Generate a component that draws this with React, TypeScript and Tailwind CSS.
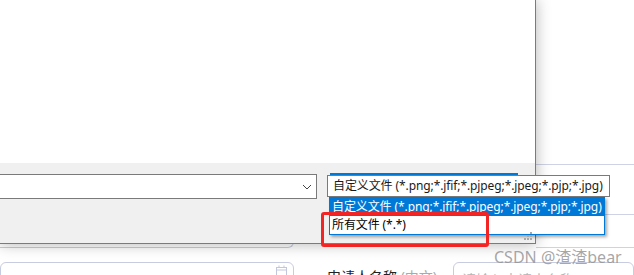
import React from 'react';

const uiFont = { fontFamily: '"Noto Sans", "Noto Sans CJK SC", sans-serif' };

const Chevron: React.FC = () => (
  <svg width="10" height="6" viewBox="0 0 10 6" className="text-[#444]">
    <polyline points="1,1 5,5 9,1" fill="none" stroke="currentColor" strokeWidth="1" />
  </svg>
);

const Grip: React.FC = () => (
  <svg width="10" height="10" viewBox="0 0 10 10" className="text-[#a8a8a8]">
    {[
      [8, 2], [5, 5], [8, 5], [2, 8], [5, 8], [8, 8],
    ].map(([x, y]) => (
      <rect key={`${x}-${y}`} x={x - 1} y={y - 1} width="2" height="2" fill="currentColor" />
    ))}
  </svg>
);

const CalendarIcon: React.FC = () => (
  <svg width="11" height="12" viewBox="0 0 11 12" className="text-[#c3c7de]">
    <rect x="0.5" y="2.5" width="10" height="9" fill="none" stroke="currentColor" />
    <line x1="0.5" y1="5" x2="10.5" y2="5" stroke="currentColor" />
    <line x1="3" y1="0.5" x2="3" y2="3" stroke="currentColor" />
    <line x1="8" y1="0.5" x2="8" y2="3" stroke="currentColor" />
  </svg>
);

const FILTER = '自定义文件 (*.png;*.jfif;*.pjpeg;*.jpeg;*.pjp;*.jpg)';

const FileTypeCombo: React.FC = () => (
  <div className="relative ml-[10px] mt-[1px] w-[283px] shrink-0">
    {/* focused combo underneath */}
    <div className="absolute -top-[2px] left-[3px] h-[2px] w-[188px] bg-[#0078d7]" />
    <div className="flex h-[22px] items-center overflow-hidden whitespace-nowrap border border-[#7a7a7a] bg-white pl-[5px] text-[12px] tracking-[-0.1px] text-[#1a1a1a]">
      {FILTER}
    </div>
    <ul className="absolute left-[2px] top-[22px] w-[276px] border border-[#0078d7] bg-white text-[12px] tracking-[-0.1px] shadow-[2px_2px_3px_rgba(0,0,0,0.35)]">
      <li className="flex h-[18px] items-center overflow-hidden whitespace-nowrap bg-[#0078d7] pl-[2px] text-white">
        {FILTER}
      </li>
      <li className="flex h-[18px] items-center whitespace-nowrap pl-[2px] text-black">所有文件 (*.*)</li>
    </ul>
  </div>
);

const FileDialog: React.FC = () => (
  <div
    className="absolute left-0 top-0 flex h-[244px] w-[536px] flex-col border-b border-r border-[#7b7b7b] bg-white shadow-[0_0_14px_rgba(0,0,0,0.3)]"
    style={uiFont}
  >
    <div className="h-[163px] bg-white" />
    <div className="relative flex flex-1 items-start bg-[#f0f0f0] pt-[11px]">
      <div className="-ml-px flex h-[25px] w-[318px] shrink-0 items-center justify-end border border-[#7a7a7a] bg-white pr-[4px]">
        <Chevron />
      </div>
      <FileTypeCombo />
      <div className="absolute bottom-[2px] right-[2px]">
        <Grip />
      </div>
    </div>
  </div>
);

const BackgroundPage: React.FC = () => (
  <div style={uiFont}>
    <div className="flex h-[248px]">
      <div className="w-[294px] rounded-br-[6px] border-b border-r border-[#c8cce0]" />
      <div className="w-[242px]" />
      <div className="flex flex-1 flex-col">
        <div className="h-[164px]" />
        <div className="h-[50px] border-t border-[#cfd2e4]" />
        <div className="h-[33px] border-t border-[#cfd2e4]" />
        <div className="border-t border-[#cfd2e4]" />
      </div>
    </div>
    <div className="flex items-start pt-[14px]">
      <div className="flex h-[30px] w-[294px] shrink-0 justify-end rounded-[6px] border border-[#c8cce0] pr-[6px] pt-[2px]">
        <CalendarIcon />
      </div>
      <div className="ml-[33px] w-[126px] shrink-0 whitespace-nowrap pt-[5px] text-[14px] leading-[20px] text-[#222]">
        申请人名称 <span className="text-[#aaa]">(中文)</span>
      </div>
      <div className="h-[30px] flex-1 whitespace-nowrap rounded-[6px] border border-[#c8cce0] pl-[8px] pt-[7px] text-[14px] leading-[20px] text-[#b5b5b5]">
        请输入申请人名称
      </div>
    </div>
  </div>
);

export default function App() {
  return (
    <div className="relative h-[275px] w-[634px] overflow-hidden bg-white">
      <BackgroundPage />
      <FileDialog />
      <div className="absolute left-[321px] top-[212px] h-[35px] w-[168px] rounded-[3px] border-[3px] border-[#f32424]" />
      <div
        className="absolute left-[494px] top-[247px] whitespace-nowrap text-[16px] leading-[20px] text-[#8f8f8f]/80"
        style={uiFont}
      >
        CSDN @渣渣bear
      </div>
    </div>
  );
}
